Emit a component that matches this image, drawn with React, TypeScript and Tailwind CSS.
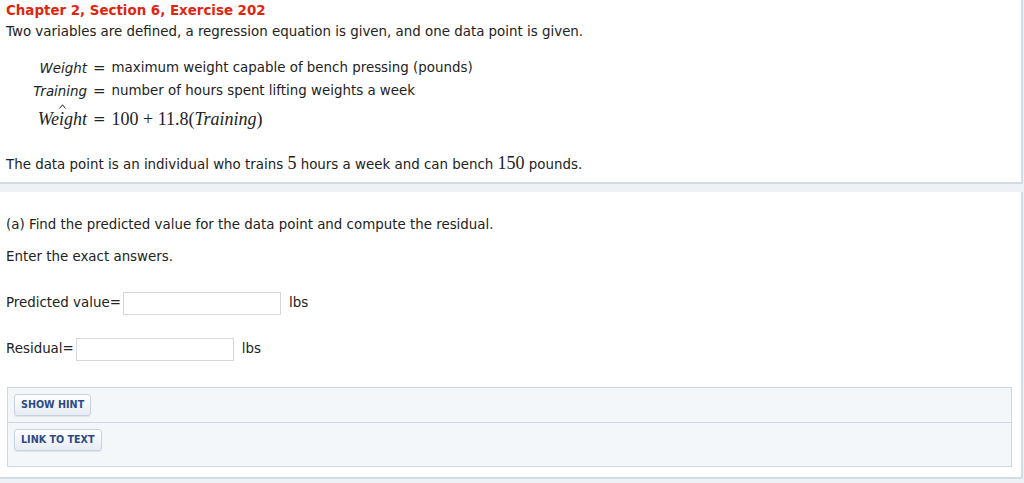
const HintButton = ({ label }: { label: string }) => (
  <button className="rounded-[3px] border border-[#c9d3df] bg-gradient-to-b from-white to-[#e6ecf3] px-[6px] h-[22px] text-[9.6px] font-bold text-[#2c4a87] shadow-[0_1px_1px_rgba(0,0,0,0.08)]">
    {label}
  </button>
);

export default function App() {
  return (
    <div className="h-[483px] w-[1024px] bg-[#eef2f6] font-['DejaVu_Sans',sans-serif] text-[13.4px] text-[#222]">
      <div className="w-[1023px] border-b-2 border-r-2 border-[#d3dbe3] bg-white pl-[6px] pt-[2px] h-[184px]">
        <div className="font-bold leading-[18px] text-[#e0260e]">
          Chapter 2, Section 6, Exercise 202
        </div>
        <div className="mt-[3px] leading-[18px]">
          Two variables are defined, a regression equation is given, and one data point is given.
        </div>
        <div className="mt-[16px] grid grid-cols-[81px_auto_1fr] items-center gap-x-[6px]">
          <div className="text-right italic leading-[23px]">Weight</div>
          <div className="text-[15px]">=</div>
          <div>maximum weight capable of bench pressing (pounds)</div>
          <div className="text-right italic leading-[23px]">Training</div>
          <div className="text-[15px]">=</div>
          <div>number of hours spent lifting weights a week</div>
          <div className="text-right font-['Liberation_Serif',serif] text-[18px] italic leading-[32px]">
            <span className="relative inline-block">
              Weight
              <svg className="absolute left-[21px] top-[1px]" width="7" height="5" viewBox="0 0 7 5">
                <path d="M0.5 4.5 L3.5 0.8 L6.5 4.5" fill="none" stroke="#222" strokeWidth="1" />
              </svg>
            </span>
          </div>
          <div className="text-[15px]">=</div>
          <div className="font-['Liberation_Serif',serif] text-[18px] leading-[32px]">
            100 + 11.8(<i>Training</i>)
          </div>
        </div>
        <div className="mt-[18px] leading-[20px]">
          The data point is an individual who trains{" "}
          <span className="font-['Liberation_Serif',serif] text-[18px]">5</span> hours a week and can bench{" "}
          <span className="font-['Liberation_Serif',serif] text-[18px]">150</span> pounds.
        </div>
      </div>

      <div className="mt-[8px] h-[287px] w-[1023px] border-b-2 border-r-2 border-[#d3dbe3] bg-white px-[6px] pt-[24px]">
        <div className="leading-[18px]">(a) Find the predicted value for the data point and compute the residual.</div>
        <div className="mt-[14px] leading-[18px]">Enter the exact answers.</div>
        <div className="mt-[26px] flex items-center">
          <span>Predicted value=</span>
          <input className="ml-[2px] h-[23px] w-[158px] border border-[#d6d6d6] bg-white" />
          <span className="ml-[8px]">lbs</span>
        </div>
        <div className="mt-[23px] flex items-center">
          <span>Residual=</span>
          <input className="ml-[2px] h-[23px] w-[158px] border border-[#d6d6d6] bg-white" />
          <span className="ml-[8px]">lbs</span>
        </div>
        <div className="mt-[26px] ml-[1px] w-[1005px] border border-[#cfd7e2] bg-[#f4f7fa]">
          <div className="border-b border-[#cfd7e2] px-[6px] pt-[6px] pb-[6px]">
            <HintButton label="SHOW HINT" />
          </div>
          <div className="px-[6px] pt-[6px] pb-[15px]">
            <HintButton label="LINK TO TEXT" />
          </div>
        </div>
      </div>
    </div>
  );
}
